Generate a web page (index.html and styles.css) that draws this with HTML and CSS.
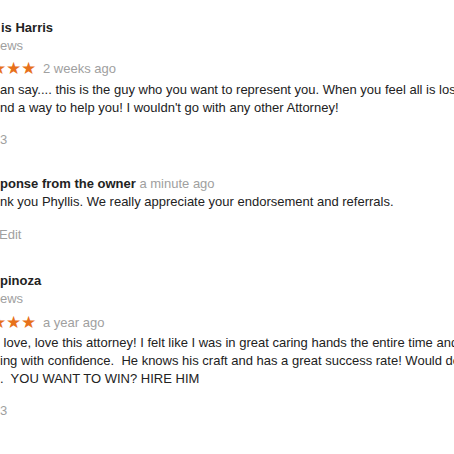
FILE: index.html
```html
<!DOCTYPE html>
<html>
<head>
<meta charset="utf-8">
<link rel="stylesheet" href="styles.css">
</head>
<body>
<div class="reviews">
  <div class="review">
    <div class="name first">is Harris</div>
    <div class="sub">ews</div>
    <div class="meta"><span class="stars">★★★</span><span class="date">2 weeks ago</span></div>
    <div class="text">
      <div class="line">an say.... this is the guy who you want to represent you. When you feel all is lost</div>
      <div class="line">nd a way to help you! I wouldn't go with any other Attorney!</div>
    </div>
    <div class="count">3</div>
  </div>
  <div class="response">
    <div class="resp-head"><span class="name">ponse from the owner</span> <span class="date">a minute ago</span></div>
    <div class="line">nk you Phyllis. We really appreciate your endorsement and referrals.</div>
    <div class="edit">Edit</div>
  </div>
  <div class="review second">
    <div class="name">pinoza</div>
    <div class="sub">ews</div>
    <div class="meta"><span class="stars">★★★</span><span class="date">a year ago</span></div>
    <div class="text">
      <div class="line"> love, love this attorney! I felt like I was in great caring hands the entire time and</div>
      <div class="line">ing with confidence.  He knows his craft and has a great success rate! Would def</div>
      <div class="line">.  YOU WANT TO WIN? HIRE HIM</div>
    </div>
    <div class="count">3</div>
  </div>
</div>
</body>
</html>
```

FILE: styles.css
```css
html, body {
  margin: 0;
  padding: 0;
  background: #fff;
  overflow: hidden;
}
body {
  width: 454px;
  height: 454px;
  font-family: Arial, "Liberation Sans", sans-serif;
  font-size: 13px;
  line-height: 18px;
  color: #222;
}
.reviews {
  padding-top: 19px;
}
.name {
  font-weight: bold;
  color: #222;
  white-space: pre;
}
.name.first {
  padding-left: 1px;
}
.sub {
  color: #a0a0a0;
}
.meta {
  margin-top: 5px;
  height: 18px;
  white-space: nowrap;
  display: flex;
  align-items: center;
}
.second .meta {
  margin-top: 6px;
}
.stars {
  color: #e7711b;
  font-size: 17px;
  line-height: 18px;
  margin-left: -9px;
}
.date {
  color: #a0a0a0;
  margin-left: 7px;
}
.resp-head .date {
  margin-left: 0;
}
.text {
  margin-top: 3px;
}
.second .text {
  margin-top: 2px;
}
.line {
  white-space: pre;
}
.count {
  color: #a0a0a0;
  margin-top: 14px;
}
.response {
  margin-top: 26px;
}
.resp-head {
  white-space: pre;
}
.edit {
  color: #a0a0a0;
  margin-top: 15px;
  margin-left: -1px;
}
.review.second {
  margin-top: 28px;
}
```
